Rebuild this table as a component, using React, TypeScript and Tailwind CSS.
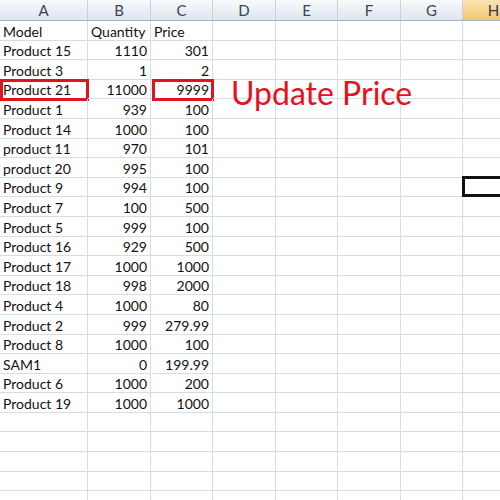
const cols = [
  { key: "A", w: "w-[88px]" },
  { key: "B", w: "w-[63px]" },
  { key: "C", w: "w-[62px]" },
  { key: "D", w: "w-[63px]" },
  { key: "E", w: "w-[62px]" },
  { key: "F", w: "w-[63px]" },
  { key: "G", w: "w-[62px]" },
  { key: "H", w: "w-[62px]" },
];

const data: [string, string, string][] = [
  ["Model", "Quantity", "Price"],
  ["Product 15", "1110", "301"],
  ["Product 3", "1", "2"],
  ["Product 21", "11000", "9999"],
  ["Product 1", "939", "100"],
  ["Product 14", "1000", "100"],
  ["product 11", "970", "101"],
  ["product 20", "995", "100"],
  ["Product 9", "994", "100"],
  ["Product 7", "100", "500"],
  ["Product 5", "999", "100"],
  ["Product 16", "929", "500"],
  ["Product 17", "1000", "1000"],
  ["Product 18", "998", "2000"],
  ["Product 4", "1000", "80"],
  ["Product 2", "999", "279.99"],
  ["Product 8", "1000", "100"],
  ["SAM1", "0", "199.99"],
  ["Product 6", "1000", "200"],
  ["Product 19", "1000", "1000"],
  ["", "", ""],
  ["", "", ""],
  ["", "", ""],
  ["", "", ""],
  ["", "", ""],
];

export default function App() {
  return (
    <div className="relative h-[500px] w-[500px] overflow-hidden bg-white font-['Lato','Open_Sans',sans-serif] text-[14px] text-[#111]">
      {/* column headers */}
      <div className="flex h-[21px] border-b border-[#9eb6ce]">
        {cols.map((c) => (
          <div
            key={c.key}
            className={`${c.w} shrink-0 flex items-center justify-center border-r text-[15px] ${
              c.key === "H"
                ? "border-[#e5b25c] bg-gradient-to-b from-[#fbe3b2] to-[#f3c46c] text-[#2d3b4f]"
                : "border-[#c5d2e3] bg-gradient-to-b from-[#f8fafc] to-[#dfe6ef] text-[#37465a]"
            }`}
          >
            {c.key}
          </div>
        ))}
      </div>

      {/* rows */}
      {data.map((row, r) => (
        <div key={r} className="flex h-[19.6px]">
          {cols.map((c, i) => {
            const text = i < 3 ? row[i] : "";
            const numeric = r > 0 && (i === 1 || i === 2);
            const selected = c.key === "H" && r === 8;
            const boxed = r === 3 && (i === 0 || i === 2);
            return (
              <div
                key={c.key}
                className={`${c.w} relative shrink-0 flex items-end overflow-visible whitespace-nowrap border-r border-b border-[#d5dde9] px-[3px] pb-[1px] leading-none ${
                  numeric ? "justify-end" : "justify-start"
                }`}
              >
                {text}
                {selected && <span className="absolute -left-[1px] -top-[2px] h-[21px] w-[70px] border-[3px] border-[#111]" />}
                {boxed && (
                  <span
                    className={`absolute -top-[1px] h-[22px] border-[3px] border-[#e0141e] ${
                      i === 0 ? "left-0 w-[89px]" : "left-[1px] w-[62px]"
                    }`}
                  />
                )}
              </div>
            );
          })}
        </div>
      ))}

      {/* text box overlay */}
      <div className="absolute left-[231px] top-[77px] whitespace-nowrap text-[32px] leading-none text-[#e8101c]">
        Update Price
      </div>
    </div>
  );
}
